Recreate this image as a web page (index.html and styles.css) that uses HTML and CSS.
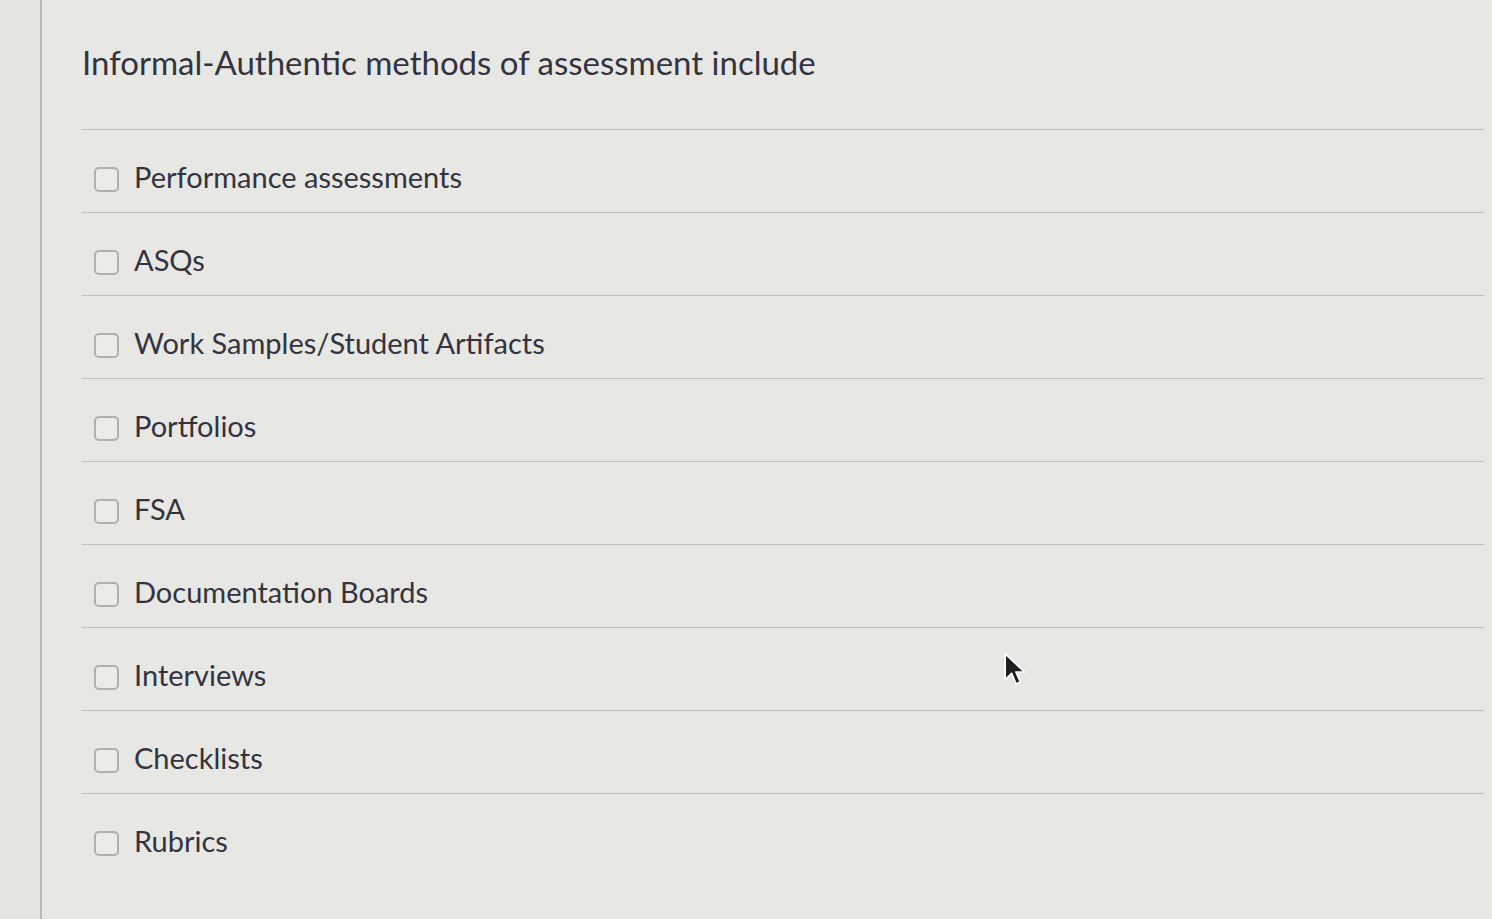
FILE: index.html
```html
<!DOCTYPE html>
<html>
<head>
<meta charset="utf-8">
<link rel="stylesheet" href="styles.css">
</head>
<body>
<div class="page">
  <div class="gutter"></div>
  <main class="question">
    <h1 class="prompt">Informal-Authentic methods of assessment include</h1>
    <ul class="answers">
      <li class="answer"><span class="box"></span><span class="label">Performance assessments</span></li>
      <li class="answer"><span class="box"></span><span class="label">ASQs</span></li>
      <li class="answer"><span class="box"></span><span class="label">Work Samples/Student Artifacts</span></li>
      <li class="answer"><span class="box"></span><span class="label">Portfolios</span></li>
      <li class="answer"><span class="box"></span><span class="label">FSA</span></li>
      <li class="answer"><span class="box"></span><span class="label">Documentation Boards</span></li>
      <li class="answer"><span class="box"></span><span class="label">Interviews</span></li>
      <li class="answer"><span class="box"></span><span class="label">Checklists</span></li>
      <li class="answer"><span class="box"></span><span class="label">Rubrics</span></li>
    </ul>
  </main>
</div>
<svg class="cursor" width="26" height="38" viewBox="0 0 24 34">
  <path d="M2 2 L2 26 L8 20 L12 30 L16 28 L12 19 L20 19 Z" fill="#1c1c22" stroke="#ffffff" stroke-width="1.6" stroke-linejoin="round"/>
</svg>
</body>
</html>
```
FILE: styles.css
```css
html, body {
  margin: 0;
  padding: 0;
  background: #e7e7e4;
}
body {
  font-family: Lato, "Noto Sans", sans-serif;
  color: #34333f;
  width: 1492px;
  height: 919px;
  overflow: hidden;
  position: relative;
}
.page {
  display: flex;
  height: 919px;
}
.gutter {
  width: 40px;
  flex: none;
  background: #e3e3e0;
  border-right: 2px solid #b9b9b6;
}
.question {
  flex: 1;
  padding: 0 8px 0 40px;
}
.prompt {
  margin: 0;
  padding-top: 42px;
  padding-bottom: 47px;
  font-size: 33px;
  line-height: 40px;
  font-weight: 400;
}
.answers {
  list-style: none;
  margin: 0;
  padding: 0;
}
.answer {
  display: flex;
  align-items: center;
  gap: 15px;
  border-top: 1px solid #c0c0bc;
  padding: 30px 0 18px 12px;
  height: 34px;
}
.box {
  width: 21px;
  height: 21px;
  border: 2px solid #b0b0ad;
  border-radius: 5px;
  flex: none;
  margin-top: 4px;
  background: #ebebe8;
}
.label {
  font-size: 29px;
  line-height: 34px;
}
.cursor {
  position: absolute;
  left: 1003px;
  top: 651px;
}
```
